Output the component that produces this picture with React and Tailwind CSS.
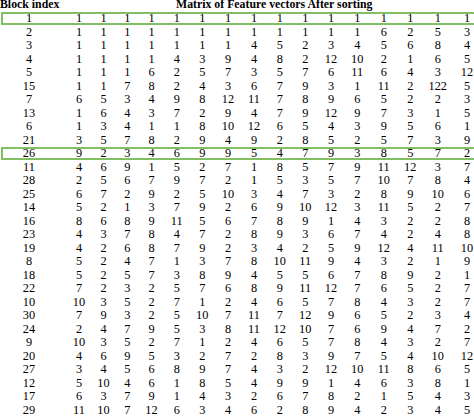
import React from "react";

const rows = [
  [1, [1,1,1,1,1,1,1,1,1,1,1,1,1,1,1,1], true],
  [2, [1,1,1,1,1,1,1,1,1,1,1,1,6,2,5,3]],
  [3, [1,1,1,1,1,1,1,4,5,2,3,4,5,6,8,4]],
  [4, [1,1,1,1,4,3,9,4,8,2,12,10,2,1,6,5]],
  [5, [1,1,1,6,2,5,7,3,5,7,6,11,6,4,3,12]],
  [15, [1,1,7,8,2,4,3,6,7,9,3,1,11,2,122,5]],
  [7, [6,5,3,4,9,8,12,11,7,8,9,6,5,2,2,3]],
  [13, [1,6,4,3,7,2,9,4,7,9,12,9,7,3,1,5]],
  [6, [1,3,4,1,1,8,10,12,6,5,4,3,9,5,6,1]],
  [21, [3,5,7,8,2,9,4,9,2,8,5,2,5,7,3,9]],
  [26, [9,2,3,4,6,9,9,5,4,7,9,3,8,5,7,2], true],
  [11, [4,6,9,1,5,2,7,1,8,5,7,9,11,12,3,7]],
  [28, [2,5,6,7,9,7,2,1,5,3,5,7,10,7,8,4]],
  [25, [6,7,2,9,2,5,10,3,4,7,3,2,8,9,10,6]],
  [14, [5,2,1,3,7,9,2,6,9,10,12,3,11,5,2,7]],
  [16, [8,6,8,9,11,5,6,7,8,9,1,4,3,2,2,8]],
  [23, [4,3,7,8,4,7,2,8,9,3,6,7,4,2,4,8]],
  [19, [4,2,6,8,7,9,2,3,4,2,5,9,12,4,11,10]],
  [8, [5,2,4,7,1,3,7,8,10,11,9,4,3,2,1,9]],
  [18, [5,2,5,7,3,8,9,4,5,5,6,7,8,9,2,1]],
  [22, [7,2,3,2,5,7,6,8,9,11,12,7,6,5,2,7]],
  [10, [10,3,5,2,7,1,2,4,6,5,7,8,4,3,2,7]],
  [30, [7,9,3,2,5,10,7,11,7,12,9,6,5,2,3,4]],
  [24, [2,4,7,9,5,3,8,11,12,10,7,6,9,4,7,2]],
  [9, [10,3,5,2,7,1,2,4,6,5,7,8,4,3,2,7]],
  [20, [4,6,9,5,3,2,7,2,8,3,9,7,5,4,10,12]],
  [27, [3,4,5,6,8,9,7,4,3,2,12,10,11,8,6,5]],
  [12, [5,10,4,6,1,8,5,4,9,9,1,4,6,3,8,1]],
  [17, [6,3,7,9,1,4,3,2,6,7,8,2,1,5,4,3]],
  [29, [11,10,7,12,6,3,4,6,2,8,9,4,2,3,4,5]],
];

const gridCols =
  "grid grid-cols-[66.5px_25px_24px_23.5px_25px_25.5px_25.5px_26px_26px_25.5px_25.5px_26px_26.5px_26.5px_26.5px_28.5px_30px]";

export default function App() {
  return (
    <div
      className="w-[474px] h-[417px] overflow-hidden bg-white text-black"
      style={{ fontFamily: '"Liberation Serif", "Times New Roman", serif' }}
    >
      <div className="w-[482px]">
        <div className="flex h-[11px] text-[11.8px] leading-[9px] font-bold whitespace-nowrap">
          <div className="w-[66.5px]">Block index</div>
          <div className="flex-1 text-center">Matrix of Feature vectors After sorting</div>
        </div>
        {rows.map(([idx, vals, hl], r) => (
          <div
            key={r}
            className={`${gridCols} relative h-[13.53px] text-[12.3px] leading-[15.1px] text-center`}
          >
            <div className="pr-[8.5px]">{idx}</div>
            {vals.map((v, i) => (
              <div key={i}>{v}</div>
            ))}
            {hl && (
              <span className="absolute left-[1px] right-[-4px] top-[0.8px] bottom-[-0.8px] border-2 border-[#82bf62] pointer-events-none" />
            )}
          </div>
        ))}
      </div>
    </div>
  );
}
